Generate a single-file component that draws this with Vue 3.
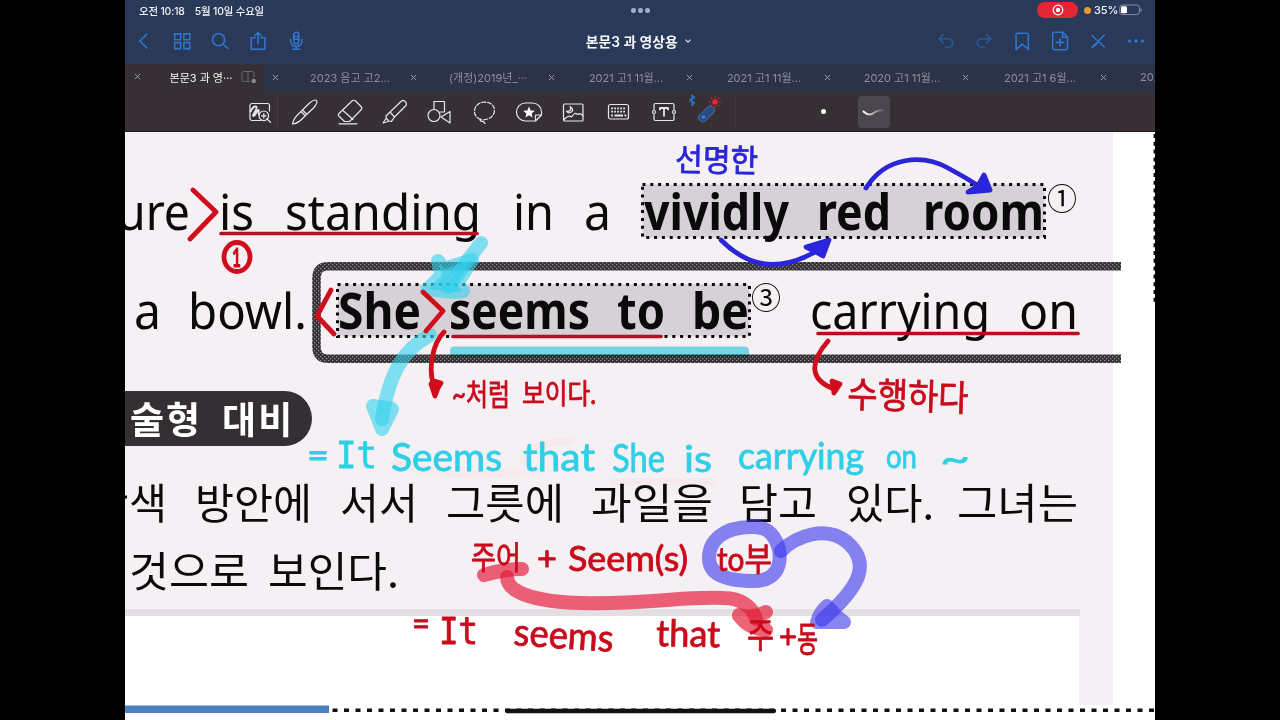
<script setup>
const tabs = [
  { title: '본문3 과 영···', active: true },
  { title: '2023 음고 고2...' },
  { title: '(개정)2019년_···' },
  { title: '2021 고1 11월...' },
  { title: '2021 고1 11월...' },
  { title: '2020 고1 11월...' },
  { title: '2021 고1 6월...' }
]

// printed words: t = text, x / w = horizontal extent, b = bold
const lines = [
  {
    id: 'l1', y: 97.5, h: 100,
    words: [
      { t: 'ure', x: 120, w: 67 }, { t: 'is', x: 222, w: 29 }, { t: 'standing', x: 288, w: 190 },
      { t: 'in', x: 516, w: 35 }, { t: 'a', x: 587, w: 21 }, { t: 'vividly', x: 647, w: 139, b: true },
      { t: 'red', x: 820, w: 68, b: true }, { t: 'room', x: 926, w: 115, b: true },
      { t: '①', x: 1048, w: 28, n: true }
    ]
  },
  {
    id: 'l2', y: 96.5, h: 159,
    words: [
      { t: 'a', x: 137, w: 21 }, { t: 'bowl.', x: 191, w: 113 }, { t: 'She', x: 341, w: 77, b: true },
      { t: 'seems', x: 452, w: 135, b: true }, { t: 'to', x: 620, w: 42, b: true },
      { t: 'be', x: 695, w: 51, b: true }, { t: '③', x: 752, w: 28, n: true },
      { t: 'carrying', x: 813, w: 174 }, { t: 'on', x: 1022, w: 53 }
    ]
  }
]

const korean = [
  {
    id: 'k1', y: 73, h: 70,
    words: [
      { t: '색', x: 131, w: 34 }, { t: '방안에', x: 197, w: 113 }, { t: '서서', x: 342, w: 74 },
      { t: '그릇에', x: 448, w: 114 }, { t: '과일을', x: 593, w: 118 }, { t: '담고', x: 741, w: 74 },
      { t: '있다.', x: 848, w: 84 }, { t: '그녀는', x: 959, w: 117 }
    ]
  },
  {
    id: 'k2', y: 71, h: 92,
    words: [{ t: '것으로', x: 131, w: 116 }, { t: '보인다.', x: 270, w: 127 }]
  }
]

// handwritten notes on top of the page
const notes = [
  { t: '선명한', x: 675, y: 171, w: 83, s: 32, c: 'blue', r: 1 },
  { t: '~처럼', x: 452, y: 405, w: 58, s: 30, c: 'red' },
  { t: '보이다.', x: 522, y: 404, w: 74, s: 28, c: 'red' },
  { t: '수행하다', x: 847, y: 407, w: 121, s: 36, c: 'red', r: 2 },
  { t: '1', x: 232, y: 267, w: 9, s: 26, c: 'red heavy' },
  { t: '=', x: 307, y: 468, w: 22, s: 36, c: 'cyan' },
  { t: 'It', x: 336, y: 468, w: 41, s: 38, c: 'cyan serif' },
  { t: 'Seems', x: 391, y: 471, w: 111, s: 38, c: 'cyan' },
  { t: 'that', x: 523, y: 471, w: 72, s: 38, c: 'cyan' },
  { t: 'She', x: 612, y: 472, w: 53, s: 38, c: 'cyan' },
  { t: 'is', x: 684, y: 472, w: 28, s: 36, c: 'cyan' },
  { t: 'carrying', x: 738, y: 469, w: 126, s: 37, c: 'cyan' },
  { t: 'on', x: 886, y: 468, w: 31, s: 33, c: 'cyan' },
  { t: '~', x: 940, y: 472, w: 30, s: 36, c: 'cyan' },
  { t: '주어', x: 471, y: 569, w: 50, s: 32, c: 'red' },
  { t: '+', x: 537, y: 570, w: 20, s: 32, c: 'red' },
  { t: 'Seem(s)', x: 568, y: 571, w: 120, s: 34, c: 'red' },
  { t: 'to부', x: 717, y: 571, w: 55, s: 33, c: 'red' },
  { t: '=', x: 412, y: 636, w: 18, s: 34, c: 'red' },
  { t: 'It', x: 439, y: 644, w: 39, s: 37, c: 'red serif' },
  { t: 'seems', x: 513, y: 645, w: 100, s: 38, c: 'red', r: 4 },
  { t: 'that', x: 656, y: 646, w: 64, s: 37, c: 'red', r: 1 },
  { t: '주', x: 747, y: 648, w: 27, s: 35, c: 'red' },
  { t: '+', x: 779, y: 648, w: 18, s: 32, c: 'red' },
  { t: '동', x: 797, y: 652, w: 21, s: 35, c: 'red' }
]
</script>

<template>
  <div class="stage">
    <div class="tablet">
      <header class="status">
        <span>오전 10:18</span>
        <span class="date">5월 10일 수요일</span>
        <span class="multitask"><i></i><i></i><i></i></span>
        <span class="rec">
          <svg width="12" height="12" viewBox="0 0 12 12"><circle cx="6" cy="6" r="4.8" fill="none" stroke="#fff" stroke-width="1.2" /><circle cx="6" cy="6" r="2.2" fill="#fff" /></svg>
        </span>
        <i class="mic-dot"></i>
        <span class="percent">35%</span>
        <svg class="battery" width="24" height="12" viewBox="0 0 24 12">
          <rect x=".8" y="1" width="19.6" height="9.6" rx="2.6" fill="none" stroke="#8490a5" />
          <rect x="2" y="2.3" width="6" height="7" rx="1.3" fill="#fff" />
          <path d="M22 4.4v3" stroke="#8490a5" stroke-width="1.2" />
        </svg>
      </header>

      <nav class="nav">
        <div class="nav-group">
          <svg viewBox="0 0 24 24"><path d="M15 4.500 7.500 12l7.500 7.500" /></svg>
          <svg viewBox="0 0 24 24"><path d="M4 4.200h6.500v6.500H4zM14 4.200h6.500v6.500H14zM4 13.800h6.500v6.500H4zM14 13.800h6.500v6.500H14z" /></svg>
          <svg viewBox="0 0 24 24"><circle cx="10.500" cy="10.500" r="6.600" /><path d="m15.300 15.300 5.200 4.900" /></svg>
          <svg viewBox="0 0 24 24"><path d="M9 8.500H4.500v12.500h15V8.500H15M12 15V3M8.500 6 12 2.700 15.500 6" /></svg>
          <svg viewBox="0 0 24 24"><rect x="9.500" y="2.500" width="5.600" height="12.500" rx="2.800" /><path d="M6 10.500v1.300a6.300 6.300 0 0 0 12.600 0v-1.300M12.300 18.100v3M8.500 21h7.600M10 7h4M10 10h4" /></svg>
        </div>
        <h1>본문3 과 영상용
          <svg viewBox="0 0 8 8"><path d="m1.500 2.700 2.500 2.500 2.500-2.500" /></svg>
        </h1>
        <div class="nav-group right">
          <svg class="dim" viewBox="0 0 24 24"><path d="M9 5 4.500 9.500 9 14M4.800 9.500h9.700a4.700 4.700 0 0 1 0 9.400h-3" /></svg>
          <svg class="dim" viewBox="0 0 24 24"><path d="m15 5 4.500 4.500L15 14M19.200 9.500H9.500a4.700 4.700 0 0 0 0 9.400h3" /></svg>
          <svg viewBox="0 0 24 24"><path d="M5.500 5q0-1.500 1.500-1.500h10.500q1.500 0 1.500 1.500v16.200l-6.700-5.700-6.800 5.700z" /></svg>
          <svg viewBox="0 0 24 24"><path d="M4 4q0-1.500 1.500-1.500H15l5.200 5.200V20q0 1.500-1.500 1.500H5.500Q4 21.500 4 20zM14.700 2.700v5.300h5.300M12.200 9.500v8M8.200 13.500h8" /></svg>
          <svg viewBox="0 0 24 24"><path d="m5.500 6 13.500 12.500M19 5.500 5.500 19M5.500 19l5-3.500" /></svg>
          <svg viewBox="0 0 24 24" class="more"><circle cx="5" cy="12" r="1.800" /><circle cx="12" cy="12" r="1.800" /><circle cx="19" cy="12" r="1.800" /></svg>
        </div>
      </nav>

      <div class="tabs">
        <div v-for="(tab, i) in tabs" :key="i" class="tab" :class="{ active: tab.active }">
          <svg class="close" viewBox="0 0 8 8"><path d="m1 1 6 6M7 1 1 7" /></svg>
          <span class="title">{{ tab.title }}</span>
          <svg v-if="tab.active" class="split" viewBox="0 0 16 14"><path d="M9 11.500H2.500a1.500 1.500 0 0 1-1.500-1.500V3a1.500 1.500 0 0 1 1.500-1.500h9A1.500 1.500 0 0 1 13 3v4M7 1.500v10" /><circle cx="12.700" cy="11" r="2.300" /></svg>
        </div>
        <div class="tab">
          <svg class="close" viewBox="0 0 8 8"><path d="m1 1 6 6M7 1 1 7" /></svg>
          <span class="title last">2021</span>
        </div>
      </div>

      <div class="tools">
        <div class="tool first"><svg viewBox="0 0 28 28"><path d="M15 22.500H6a2 2 0 0 1-2-2v-13a2 2 0 0 1 2-2h15.500a2 2 0 0 1 2 2V13M20.800 20.800l3.700 3.500" /><path class="thick" d="M4.500 14c1-4 5-7 6-5 1 3-5 8-3 9 2 0 4-7 5-6 1 2-1 4 1 5" /><circle cx="17.800" cy="17.800" r="4.800" /><path d="M15.500 17.800h4.600M17.800 15.500v4.600" /></svg></div>
        <div class="tool"><svg viewBox="0 0 28 28"><path d="M1.500 26c.5-4 3.500-8 8-12L18 5.500c3-2.500 6.500-4 7.500-3s-.5 4.500-3 7.500L14 18c-4 4.500-8.500 8-12.500 8zM10.500 14l3.500 3.500M12 12.500l3.500 3.500" /></svg></div>
        <div class="tool"><svg viewBox="0 0 28 28"><path d="M8.500 23.500 2.800 18q-1-1.200 0-2.300L16 3q1.700-1.500 3.500 0l5.500 5.500q1.700 2 0 3.500L13.500 23.500zM7 12.500l10 9M3 25.800h18" /></svg></div>
        <div class="tool"><svg viewBox="0 0 28 28"><path d="M9 14 20.500 3q1.500-1.200 3 0l1.500 1.500q1 1.500 0 3L13.500 19zM9 14l-4 4 .5 2.500L8 23l2.500.3 3-4.300M5 20.500l-3 4.500 5-1.500" /></svg></div>
        <div class="tool"><svg viewBox="0 0 28 28"><path d="M9 11.500V3.500h10.500v10.500H15M25 13.500v11.500l-9-6z" /><circle cx="9" cy="17.500" r="6" /></svg></div>
        <div class="tool"><svg viewBox="0 0 28 28"><path stroke-dasharray="4 1.800" d="M10.500 21.500C1 18 3 4.500 14.500 4c12.500 0 12.500 14 4 16.500-3 1.500-6 1.500-8 1z" /><path d="M10.500 21c-2 3 3 1 4.500 4.500" /></svg></div>
        <div class="tool"><svg viewBox="0 0 28 28"><path d="M18 23h-7.500a9 9 0 0 1-9-9 9 9 0 0 1 9-9h7a9 9 0 0 1 9 9v3l-6 6zM26.500 17h-6v6" /><path class="fill" d="m14 8.500 1.600 3.900 4.200.3-3.200 2.700 1 4.100-3.600-2.200-3.600 2.200 1-4.100-3.200-2.700 4.200-.3z" /></svg></div>
        <div class="tool"><svg viewBox="0 0 28 28"><rect x="4.500" y="6" width="19.500" height="17" rx="1" /><path d="M11 8.500c2 3-.5 5.500-3.500 4.500 1.500 3.500 7 1 6-2-.3-1.300-1-2-2.500-2.500M5 21.500c4-4 6-4 7.500-2.500 3-4.500 4-4 6-2.500 2-1.500 4-.5 5.500 1.500" /></svg></div>
        <div class="tool"><svg viewBox="0 0 28 28"><rect x="4.500" y="6.500" width="20" height="14.500" rx="2" /><path class="thick" stroke-dasharray="1.800 1.200" d="M7.200 10.300h15M7.200 13.700h15" /><path class="thick" d="M7.200 17.500h1.800M10.500 17.500h8.500M20.500 17.500h1.800" /></svg></div>
        <div class="tool"><svg viewBox="0 0 28 28"><path d="M5 11.500V7a1.500 1.500 0 0 1 1.500-1.500h17A1.500 1.500 0 0 1 25 7v4.500M25 16.500V21a1.500 1.500 0 0 1-1.500 1.500h-17A1.500 1.500 0 0 1 5 21v-4.500" /><circle cx="5" cy="14" r="1.500" /><circle cx="25" cy="14" r="1.500" /><path class="thick" d="M11 12.200v-2.200h8v2.200M15 10v8.500" /></svg></div>
        <div class="tool">
          <svg class="pointer" viewBox="0 0 34 34">
            <path class="bt" d="m.5 6 5 4L3 12.500V2l2.500 2.500-5 4" />
            <rect x="8.500" y="17" width="18" height="8" rx="3" transform="rotate(-45 17.500 21)" fill="#29497f" stroke="#45618f" />
            <circle class="led" cx="14.500" cy="24" r="1.800" />
            <circle class="lamp" cx="26" cy="9" r="2.800" />
            <path class="rays" d="M26 3.500v1.200M26 13.300v1.200M20.500 9h1.200M30.300 9h1.200M22.100 5.100l.8.800M29.100 12.100l.8.800M29.900 5.100l-.8.800M22.900 12.100l-.8.800" />
          </svg>
        </div>
        <i class="sep"></i>
        <i class="thin-dot"></i>
        <div class="preset"><svg viewBox="0 0 32 32"><defs><linearGradient id="pen"><stop offset="0" stop-color="#fff" /><stop offset="1" stop-color="#66616b" /></linearGradient></defs><path d="M5.500 15.500c4 4 8 3.500 11 1s5-2.500 8-2" fill="none" stroke="url(#pen)" stroke-width="1.800" stroke-linecap="round" /></svg></div>
      </div>

      <main class="page">
        <svg class="layer" viewBox="125 132 1030 588">
          <defs>
            <pattern id="weave" width="4" height="4" patternUnits="userSpaceOnUse">
              <rect width="4" height="4" fill="#333033" />
              <rect x="0" y="0" width="1.300" height="1.300" fill="#918e91" />
              <rect x="2" y="2" width="1.300" height="1.300" fill="#918e91" />
            </pattern>
          </defs>
          <path d="M1113 132h42v588H125V616h954v89h34z" fill="#fff" />
          <path d="M125 609h955v7H125z" fill="#e3e0e3" />
          <path d="M1154.500 134v170" stroke="#111" stroke-width="2" stroke-dasharray="4 3.800" />
          <g fill="#d6d1d6" stroke="#0b0a0b" stroke-width="3" stroke-dasharray="3 4.800">
            <path d="M642.500 184.500h402v53h-402z" />
            <path d="M337.500 284.500h412v52h-412z" />
          </g>
          <path class="frame" d="M1121 266.300H328q-11.500 0-11.500 11.500v69q0 12 11.500 12h793" />
          <g class="smudge">
            <path d="M523 464q10-25 50-22M392 462q60 20 150 8M610 482h105" />
          </g>
          <path d="M332.500 710.300h822" stroke="#111" stroke-width="3.400" stroke-dasharray="5 6.500" />
          <path d="M125 705.500h204v7.500H125z" fill="#4a80c0" />
          <path d="M507 711h267" stroke="#111" stroke-width="4.300" stroke-linecap="round" />
        </svg>

        <svg v-for="line in lines" :key="line.id" class="line" :height="line.h" :viewBox="`125 0 1030 ${line.h}`">
          <text
            v-for="word in line.words"
            :key="word.x"
            :class="{ bold: word.b, num: word.n }"
            :x="word.x - (word.n ? 1 : 3)"
            :y="word.n ? line.y - 20 : line.y"
            :textLength="word.w + (word.n ? 2 : 6)"
            lengthAdjust="spacingAndGlyphs"
          >{{ word.t }}</text>
        </svg>

        <div class="badge"><span>술형</span><span>대비</span></div>

        <svg v-for="line in korean" :key="line.id" class="line ko" :height="line.h" :viewBox="`125 0 1030 ${line.h}`">
          <path v-if="line.id === 'k1'" d="M124 51h3" stroke="#0b0a0b" stroke-width="3" />
          <text
            v-for="word in line.words"
            :key="word.x"
            :x="word.x - 2"
            :y="line.y"
            :textLength="word.w + 4"
            lengthAdjust="spacingAndGlyphs"
          >{{ word.t }}</text>
        </svg>

        <!-- pen and highlighter strokes -->
        <svg class="layer ink" viewBox="125 132 1030 588">
          <g class="marker cyan-marker">
            <path d="M481 243q-16 20-32 44" />
            <path class="head" d="M438 261l6 8 28-9-16 25 7 6-10 1-25-3 14-14z" />
            <path d="M430 335c-28 15-41 40-48 84" />
            <path d="M373 406l9 23 10-20z" />
          </g>
          <path class="cyan-line" d="M454 346.500h290q5 0 5 5v6H450v-7q0-4 4-4z" />
          <g class="marker red-marker">
            <path d="M484 575q20-6 38-6" />
            <path d="M507 577c0 14 24 25 75 26 60 2 100-7 142-5 16 0 28 8 32 21" />
            <path d="M739 615q8 13 27 15M739 616q16 2 27-4" />
          </g>
          <g class="marker blue-marker">
            <path d="M779 549c-5-17-14-23-28-22-28 0-42 14-42 31 0 19 22 23 45 23 21 0 28-14 25-32z" />
            <path d="M781 551c15-15 45-26 66-9 24 21 14 44-25 78" />
            <path d="M827 606q-7 6-10 16h27l-8-6z" />
          </g>

          <g class="pen blue-pen">
            <path d="M866 188c20-32 57-34 82-20q17 9 34 20M721 240c30 30 62 32 101 8" />
            <path class="solid" d="m984 175 6 15-22 2 10-6zM829 240l-23 7 8 4 9 5z" />
          </g>
          <g class="pen red-pen">
            <path d="M193 190l23 22-26 27M331 290l-14 26 17 18M423 292l20 19-17 20" />
            <ellipse cx="237" cy="257" rx="13" ry="14.500" />
            <path d="M444 332c-12 12-16 38-10 54M828 341c-19 22-18 39 6 48" />
            <path class="solid" d="M434 381l7 2-3 5-3 8-4-12zM832 381l8 3-6 9z" />
            <path class="ruled" d="M221 233.500h256M453 336.500h208M818 333.500h260" />
          </g>
          <text
            v-for="(note, i) in notes"
            :key="i"
            :class="note.c"
            :x="note.x"
            :y="note.y"
            :font-size="note.s"
            :textLength="note.w"
            lengthAdjust="spacingAndGlyphs"
            :transform="note.r ? `rotate(${note.r} ${note.x} ${note.y})` : null"
          >{{ note.t }}</text>
        </svg>
      </main>
    </div>
  </div>
</template>

<style>
body {
  background: #000;
}
</style>

<style scoped>
.stage {
  width: 1280px;
  height: 720px;
  overflow: hidden;
  background: #000;
  font-family: Inter, "Noto Sans CJK KR", sans-serif;
}
.tablet {
  width: 1030px;
  height: 720px;
  margin-left: 125px;
  display: flex;
  flex-direction: column;
  overflow: hidden;
}

/* Status bar */
.status {
  position: relative;
  height: 20px;
  box-sizing: border-box;
  padding: 0 12px 0 14px;
  display: flex;
  align-items: center;
  flex: none;
  background: #2a3958;
  color: #f2f5fa;
  font-size: 10.4px;
  font-weight: 500;
  letter-spacing: -.15px;
  white-space: nowrap;
}
.date {
  margin-left: 10px;
}
.multitask {
  position: absolute;
  left: 506px;
  top: 8px;
  display: flex;
  gap: 2.500px;
}
.multitask i {
  width: 4.500px;
  height: 4.500px;
  border-radius: 50%;
  background: #a2afc9;
}
.rec {
  width: 41px;
  height: 15.500px;
  margin-left: auto;
  display: flex;
  align-items: center;
  justify-content: center;
  border-radius: 8px;
  background: #e32636;
}
.mic-dot {
  width: 7px;
  height: 7px;
  margin: 0 3px 0 6px;
  border-radius: 50%;
  background: #e29a35;
}
.percent {
  width: 25px;
  font-size: 11px;
}

/* Navigation */
.nav {
  height: 43.500px;
  flex: none;
  box-sizing: border-box;
  padding-bottom: 1.500px;
  display: flex;
  justify-content: space-between;
  background: #2a3958;
}
.nav-group {
  display: flex;
  align-items: center;
  width: 400px;
}
.nav-group:first-child {
  margin-left: -.5px;
}
.nav-group.right {
  justify-content: flex-end;
}
.nav-group svg {
  width: 22px;
  height: 22px;
  margin: 0 8px;
  fill: none;
  stroke: #2f75cf;
  stroke-width: 1.700;
  stroke-linecap: round;
  stroke-linejoin: round;
}
.nav-group .dim {
  stroke: #2a589c;
}
.nav-group .more {
  fill: #2f75cf;
  stroke: none;
}
.nav h1 {
  margin: 0 0 0 -5px;
  padding-left: 3px;
  display: flex;
  align-items: center;
  color: #f4f7fb;
  font-size: 13.800px;
  font-weight: 600;
  white-space: nowrap;
}
.nav h1 svg {
  width: 8px;
  height: 8px;
  margin-left: 6px;
  fill: none;
  stroke: #dfe6f0;
  stroke-width: 1.200;
}

/* Document tabs */
.tabs {
  height: 28.500px;
  flex: none;
  display: flex;
  overflow: hidden;
  background: #2c3247;
}
.tab {
  width: 138px;
  height: 27px;
  flex: none;
  display: flex;
  align-items: center;
  color: #8b90a0;
  font-size: 11px;
  white-space: nowrap;
}
.close {
  width: 7px;
  height: 7px;
  margin-left: 9px;
  fill: none;
  stroke: #a3a5b0;
}
.title {
  flex: 1;
  padding-left: 20px;
  text-align: center;
}
.title.last {
  padding-left: 33px;
  text-align: left;
}
.tab.active {
  height: 28.500px;
  box-sizing: border-box;
  padding-bottom: 2px;
  background: #363035;
  color: #f5f3f5;
}
.split {
  width: 16px;
  height: 14px;
  margin-right: 6px;
  fill: none;
  stroke: #6b666b;
}
.split circle {
  fill: #8b868b;
  stroke: none;
}

/* Tool palette */
.tools {
  height: 40px;
  flex: none;
  box-sizing: border-box;
  padding-left: 113.200px;
  display: flex;
  align-items: center;
  background: #363035;
  border-bottom: 1px solid #1d1a1d;
}
.tool {
  width: 44.700px;
  height: 38px;
  flex: none;
  display: flex;
  align-items: center;
  justify-content: center;
}
.tool svg {
  width: 28px;
  height: 28px;
  fill: none;
  stroke: #e9e6e9;
  stroke-width: 1.200;
  stroke-linecap: round;
  stroke-linejoin: round;
}
.tool.first {
  box-sizing: border-box;
  border-right: 1px solid #443e43;
  height: 30px;
  width: 40px;
  margin-right: 4.700px;
}
.tool.first svg {
  margin-left: 4px;
}
.tool svg .thick {
  stroke-width: 1.800;
  stroke-linecap: butt;
}
.tool svg .fill {
  fill: #fff;
  stroke: none;
}
.tool svg.pointer {
  width: 34px;
  height: 34px;
  margin: 0 0 4px -2px;
}
.pointer .bt {
  stroke: #2678d5;
}
.pointer .led {
  fill: #3283ef;
  stroke: none;
}
.pointer .lamp {
  fill: #f02330;
  stroke: none;
}
.pointer .rays {
  stroke: #c62c37;
}
.sep {
  width: 1px;
  height: 30px;
  margin-left: 5px;
  background: #403a3f;
}
.thin-dot {
  width: 5px;
  height: 5px;
  margin-left: 85.500px;
  border-radius: 50%;
  background: #fff;
}
.preset {
  width: 32px;
  height: 32px;
  margin-left: 31.500px;
  border-radius: 4px;
  background: #4b474f;
}

/* Document */
.page {
  position: relative;
  height: 588px;
  flex: none;
  overflow: hidden;
  background: #f4f0f4;
}
.layer {
  position: absolute;
  inset: 0;
  width: 1030px;
  height: 588px;
}
.frame {
  fill: none;
  stroke: url(#weave);
  stroke-width: 8.500;
}
.smudge {
  fill: none;
  stroke: #f8e6e6;
  stroke-width: 8;
  opacity: .6;
}
.line {
  position: relative;
  display: block;
  width: 1030px;
  overflow: visible;
  fill: #0b0a0b;
  font-family: "Noto Sans", "Open Sans", sans-serif;
  font-size: 50px;
}
.line .bold {
  font-weight: 700;
}
.line .num {
  font-family: "Noto Sans CJK KR", sans-serif;
  font-size: 31px;
}
.line.ko {
  font-family: "Noto Sans CJK KR", sans-serif;
  font-size: 42px;
}
.badge {
  position: relative;
  width: 187px;
  height: 55px;
  box-sizing: border-box;
  padding-left: 5px;
  display: flex;
  align-items: center;
  gap: 20px;
  border-radius: 0 28px 28px 0;
  background: #332f33;
  color: #fff;
  font-family: "Noto Sans CJK KR", sans-serif;
  font-size: 37px;
  font-weight: 700;
  letter-spacing: 2px;
  line-height: 52px;
}
.badge span {
  margin-top: -2px;
}

/* Ink */
.marker {
  fill: none;
  stroke-width: 14;
  stroke-linecap: round;
  stroke-linejoin: round;
}
.cyan-marker path {
  stroke: #30d2ec;
  stroke-opacity: .6;
}
.cyan-marker .head {
  fill: #30c8ec;
  fill-opacity: .6;
}
.cyan-line {
  fill: #7be2ef;
  mix-blend-mode: multiply;
}
.red-marker path {
  stroke: #e51a38;
  stroke-opacity: .68;
}
.blue-marker path {
  stroke: #3a35ec;
  stroke-opacity: .6;
}
.pen {
  fill: none;
  stroke-width: 4.800;
  stroke-linecap: round;
  stroke-linejoin: round;
}
.blue-pen {
  stroke: #2b25d8;
}
.red-pen {
  stroke: #d00d1c;
}
.blue-pen .solid {
  fill: #2b25f0;
}
.red-pen .solid {
  fill: #e00012;
}
.red-pen .ruled {
  stroke: #b80f20;
  stroke-width: 3.700;
}
.ink text {
  font-family: Lato, "Noto Sans CJK KR", sans-serif;
  font-weight: 400;
  stroke-width: .8;
  stroke-linejoin: round;
}
.ink text.serif {
  font-family: "DejaVu Sans Mono", monospace;
}
.ink text.heavy {
  font-weight: 700;
}
.ink .blue {
  fill: #2b25d8;
  stroke: #2b25d8;
}
.ink .red {
  fill: #c90b1b;
  stroke: #c90b1b;
}
.ink .cyan {
  fill: #2fcfe6;
  stroke: #2fcfe6;
}
</style>
